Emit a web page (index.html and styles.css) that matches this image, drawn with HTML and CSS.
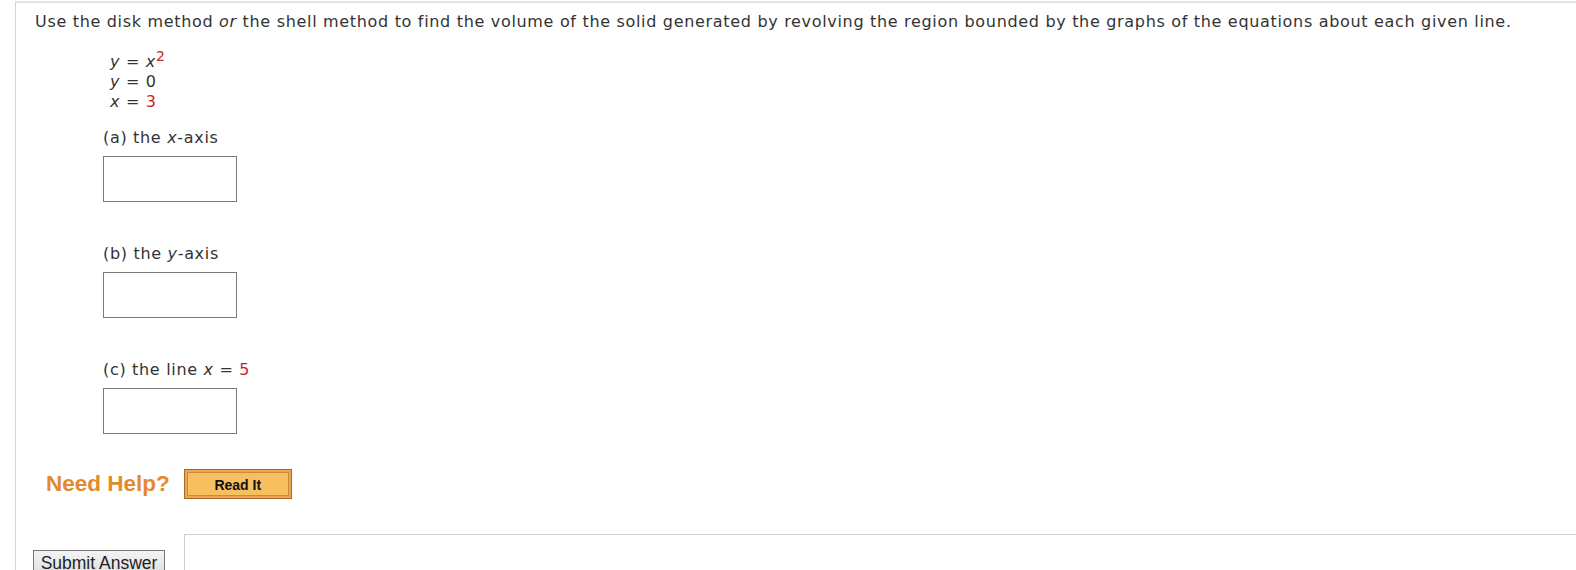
FILE: index.html
```html
<!DOCTYPE html>
<html>
<head>
<meta charset="utf-8">
<link rel="stylesheet" href="styles.css">
</head>
<body>
<div class="page">
  <div class="content">
    <p class="prompt">Use the disk method <i>or</i> the shell method to find the volume of the solid generated by revolving the region bounded by the graphs of the equations about each given line.</p>
    <div class="parts">
      <div class="eqs">
        <div><i>y</i> = <i>x</i><sup class="red">2</sup></div>
        <div><i>y</i> = 0</div>
        <div><i>x</i> = <span class="red">3</span></div>
      </div>
      <div class="part first">(a) the <i>x</i>-axis</div>
      <div class="answer"></div>
      <div class="part">(b) the <i>y</i>-axis</div>
      <div class="answer"></div>
      <div class="part">(c) the line <i>x</i> = <span class="red">5</span></div>
      <div class="answer"></div>
    </div>
    <div class="help">
      <span class="need">Need Help?</span>
      <span class="readit"><span class="readit-inner">Read It</span></span>
    </div>
    <div class="bottom">
      <button class="submit">Submit Answer</button>
      <div class="panel"></div>
    </div>
  </div>
</div>
</body>
</html>
```
FILE: styles.css
```css
html, body {
  margin: 0;
  padding: 0;
  background: #fff;
  height: 100%;
  overflow: hidden;
}
.page {
  margin-left: 15px;
  margin-top: 1px;
  border-left: 1px solid #d4d4d4;
  border-top: 2px solid #e2e2e2;
  height: 567px;
  overflow: hidden;
}
.content {
  padding: 9px 0 0 19px;
  font-family: "DejaVu Sans", Verdana, sans-serif;
  font-size: 16px;
  line-height: 20px;
  letter-spacing: 0.68px;
  color: #333;
}
.prompt {
  margin: 0;
}
.red {
  color: #cc1f1f;
}
sup {
  font-size: 14px;
  line-height: 0;
  vertical-align: 6px;
}
.parts {
  margin-left: 68px;
}
.eqs {
  margin-top: 20px;
  margin-left: 7px;
}
.part {
  margin-top: 42px;
}
.part.first {
  margin-top: 16px;
}
.answer {
  margin-top: 8px;
  width: 132px;
  height: 44px;
  border: 1px solid #7a7a7a;
}
.help {
  display: flex;
  align-items: center;
  margin-top: 35px;
  margin-left: 11px;
  gap: 14px;
  letter-spacing: 0;
}
.need {
  font-family: "Liberation Sans", Arial, sans-serif;
  font-weight: bold;
  font-size: 22.5px;
  color: #e38a2f;
}
.readit {
  display: inline-flex;
  box-sizing: border-box;
  width: 108px;
  height: 30px;
  border: 1px solid #a9692a;
  background: #eea54e;
  padding: 2px;
}
.readit-inner {
  flex: 1;
  display: flex;
  align-items: center;
  justify-content: center;
  border: 1px solid #c98a3e;
  background: #f6bf5f;
  font-family: "Liberation Sans", Arial, sans-serif;
  font-weight: bold;
  font-size: 14px;
  color: #111;
  padding-top: 1px;
}
.bottom {
  display: flex;
  align-items: flex-start;
  margin-top: 35px;
  margin-left: -2px;
  letter-spacing: 0;
}
.submit {
  margin-top: 16px;
  width: 132px;
  height: 26px;
  padding: 0;
  font-family: "Liberation Sans", Arial, sans-serif;
  font-size: 17.5px;
  line-height: 24px;
  color: #222;
  background: linear-gradient(#f4f4f4, #dedede);
  border: 1px solid #777;
  border-radius: 0;
}
.panel {
  margin-left: 19px;
  flex: 1;
  height: 100px;
  border-top: 1px solid #cfcfcf;
  border-left: 1px solid #cfcfcf;
}
```
